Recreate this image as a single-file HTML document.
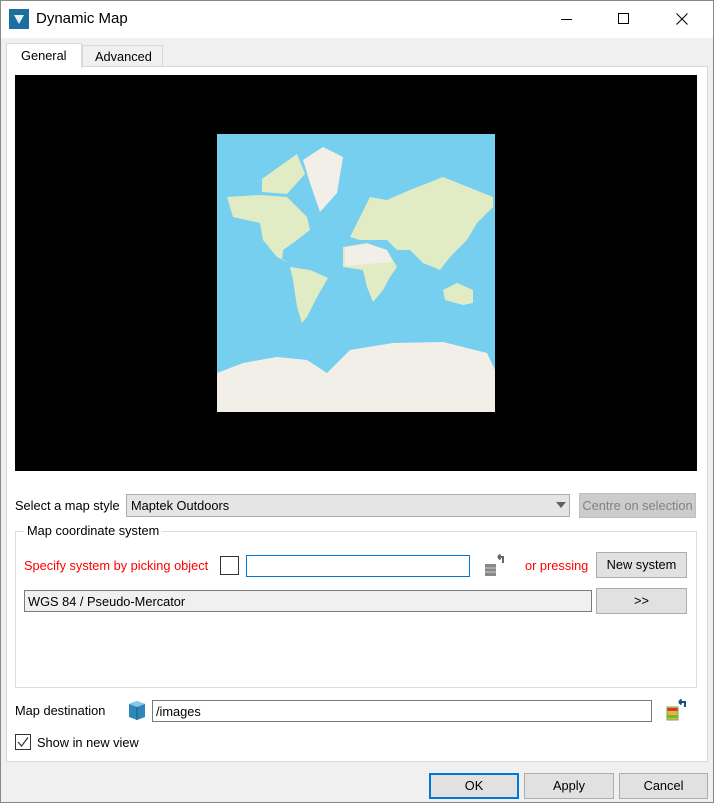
<!DOCTYPE html>
<html><head><style>
*{box-sizing:border-box;margin:0;padding:0}
body{width:714px;height:803px;background:#f0f0f0;font-family:"Liberation Sans",sans-serif;font-size:12.8px;color:#000;position:relative;overflow:hidden}
.a{position:absolute}
.win{left:0;top:0;width:714px;height:803px;border:1px solid #888;}
.btn{position:absolute;background:#e1e1e1;border:1px solid #adadad;text-align:center;font-size:12.8px}
.txt{position:absolute;white-space:nowrap}
</style></head><body>
<div class="a win"></div>
<div class="a" style="left:1px;top:1px;width:712px;height:37px;background:#fff"></div>
<div class="a" style="left:9px;top:9px;width:20px;height:20px;background:#1a6fa0"></div>
<svg class="a" style="left:9px;top:9px" width="20" height="20"><path d="M5 6 L15 6 L10 15 Z" fill="#e8eef2"/></svg>
<div class="txt" style="left:36px;top:10px;font-size:15px">Dynamic Map</div>
<div class="a" style="left:561px;top:19px;width:11px;height:1px;background:#000"></div>
<div class="a" style="left:618px;top:13px;width:11px;height:11px;border:1px solid #000"></div>
<svg class="a" style="left:676px;top:13px" width="12" height="12"><path d="M0.5 0.5L11.5 11.5M11.5 0.5L0.5 11.5" stroke="#000" stroke-width="1"/></svg>
<!-- tabs -->
<div class="a" style="left:82px;top:45px;width:81px;height:22px;background:#f0f0f0;border:1px solid #d9d9d9"></div>
<div class="txt" style="left:95px;top:49px">Advanced</div>
<div class="a" style="left:6px;top:66px;width:702px;height:696px;background:#fff;border:1px solid #d9d9d9"></div>
<div class="a" style="left:6px;top:43px;width:76px;height:25px;background:#fff;border:1px solid #d9d9d9;border-bottom:none"></div>
<div class="txt" style="left:21px;top:48px">General</div>
<!-- map -->
<div class="a" style="left:15px;top:75px;width:682px;height:396px;background:#000"></div>
<svg class="a" style="left:217px;top:134px" width="278" height="278" viewBox="0 0 278 278">
<rect width="278" height="278" fill="#76cfef"/>
<g fill="#e2ecc4">
<polygon points="10,63 43,61 70,63 90,83 93,96 76,109 66,116 65,126 73,129 60,123 46,106 43,89 16,83"/>
<polygon points="73,133 93,136 111,144 100,163 90,183 85,189 80,173 76,146"/>
<polygon points="126,113 150,109 170,116 180,133 173,143 166,156 156,168 150,153 146,136 126,133"/>
<polygon points="133,103 143,83 153,63 170,66 193,56 226,43 276,63 276,73 260,89 250,106 233,123 223,136 206,129 193,116 180,116 170,106 143,106"/>
<polygon points="226,156 240,149 256,156 256,169 246,171 228,166"/>
<polygon points="45,45 80,20 88,40 70,60 45,58"/>
</g>
<g fill="#f2efe9">
<polygon points="86,26 106,13 126,23 120,59 103,78 93,49"/>
<polygon points="128,113 150,110 170,116 175,128 150,130 128,132"/>
<polygon points="0,239 26,229 60,223 90,226 110,239 133,216 176,209 226,208 270,219 278,236 278,278 0,278"/>
</g>
</svg>
<!-- map style -->
<div class="txt" style="left:15px;top:498px">Select a map style</div>
<div class="a" style="left:126px;top:494px;width:444px;height:23px;background:#e5e5e5;border:1px solid #adadad"></div>
<div class="txt" style="left:131px;top:498px">Maptek Outdoors</div>
<svg class="a" style="left:556px;top:502px" width="10" height="6"><path d="M0 0L10 0L5 6Z" fill="#606060"/></svg>
<div class="btn" style="left:579px;top:493px;width:117px;height:25px;background:#ccc;border-color:#bfbfbf;color:#838383;line-height:23px">Centre on selection</div>
<!-- group -->
<div class="a" style="left:15px;top:531px;width:682px;height:157px;border:1px solid #dcdcdc"></div>
<div class="txt" style="left:24px;top:523px;background:#fff;padding:0 3px">Map coordinate system</div>
<div class="txt" style="left:24px;top:558px;color:#f00">Specify system by picking object</div>
<div class="a" style="left:220px;top:556px;width:19px;height:19px;border:1px solid #333;background:#fff"></div>
<div class="a" style="left:246px;top:555px;width:224px;height:22px;border:1px solid #0078d7;background:#fff"></div>
<svg class="a" style="left:484px;top:553px" width="24" height="24"><rect x="1" y="11" width="11" height="12" fill="#888"/><path d="M1 15H12M1 19H12" stroke="#ccc"/><path d="M14 4H19V10M14 4L16.5 1.5M14 4L16.5 6.5" stroke="#666" stroke-width="2" fill="none"/></svg>
<div class="txt" style="left:525px;top:558px;color:#f00">or pressing</div>
<div class="btn" style="left:596px;top:552px;width:91px;height:26px;line-height:24px">New system</div>
<div class="a" style="left:24px;top:590px;width:568px;height:22px;border:1px solid #7a7a7a;background:#f0f0f0"></div>
<div class="txt" style="left:28px;top:594px">WGS 84 / Pseudo-Mercator</div>
<div class="btn" style="left:596px;top:588px;width:91px;height:26px;line-height:24px">&gt;&gt;</div>
<!-- destination -->
<div class="txt" style="left:15px;top:703px">Map destination</div>
<svg class="a" style="left:127px;top:700px" width="20" height="21"><path d="M10 1L18 4V17L10 20L2 17V4Z" fill="#2f86b8"/><path d="M2 4L10 7L18 4L10 1Z" fill="#8cc6e6"/><path d="M10 7V20" stroke="#1d5f86"/></svg>
<div class="a" style="left:152px;top:700px;width:500px;height:22px;border:1px solid #7a7a7a;background:#fff"></div>
<div class="txt" style="left:156px;top:704px">/images</div>
<svg class="a" style="left:666px;top:698px" width="24" height="26"><rect x="1" y="9" width="11" height="13" fill="#e9b536" stroke="#7a5" stroke-width="1"/><rect x="1.5" y="10" width="10" height="3" fill="#d33"/><rect x="1.5" y="17" width="10" height="3" fill="#6b4"/><path d="M13 4H19V9M13 4L15.5 1.5M13 4L15.5 6.5" stroke="#1d4f7a" stroke-width="2" fill="none"/></svg>
<div class="a" style="left:15px;top:734px;width:16px;height:16px;border:1px solid #333;background:#fff"></div>
<svg class="a" style="left:16px;top:735px" width="14" height="14"><path d="M2 7L5.5 11L12 2.5" stroke="#333" stroke-width="1.2" fill="none"/></svg>
<div class="txt" style="left:37px;top:735px">Show in new view</div>
<!-- buttons -->
<div class="btn" style="left:429px;top:773px;width:90px;height:26px;border:2px solid #0078d7;line-height:22px">OK</div>
<div class="btn" style="left:524px;top:773px;width:90px;height:26px;line-height:24px">Apply</div>
<div class="btn" style="left:619px;top:773px;width:89px;height:26px;line-height:24px">Cancel</div>
</body></html>
